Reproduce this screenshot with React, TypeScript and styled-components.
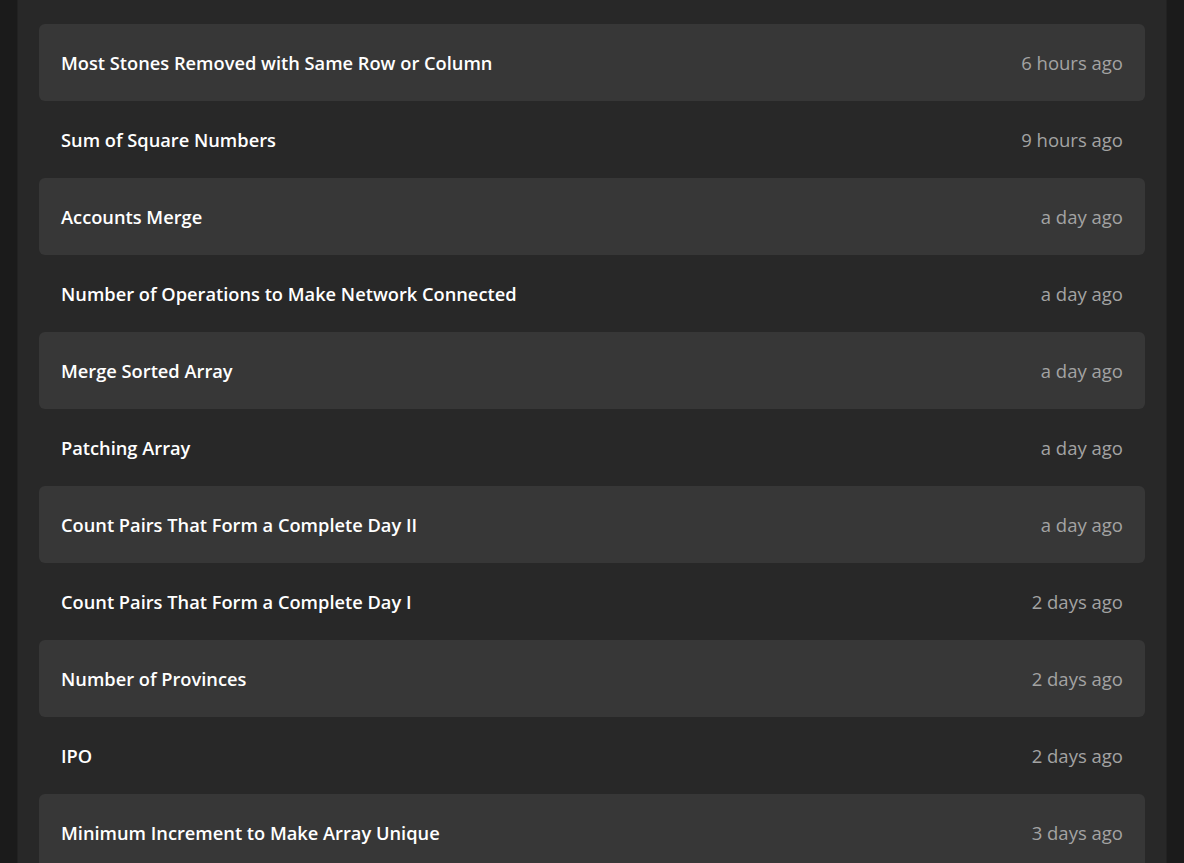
import React from 'react';
import styled, {createGlobalStyle} from "styled-components";

const GlobalStyle = createGlobalStyle`
  html, body {
    margin: 0;
    padding: 0;
    background: #1b1b1b;
    overflow: hidden;
  }
  * {
    box-sizing: border-box;
  }
`

const problems = [
    {title: "Most Stones Removed with Same Row or Column", time: "6 hours ago"},
    {title: "Sum of Square Numbers", time: "9 hours ago"},
    {title: "Accounts Merge", time: "a day ago"},
    {title: "Number of Operations to Make Network Connected", time: "a day ago"},
    {title: "Merge Sorted Array", time: "a day ago"},
    {title: "Patching Array", time: "a day ago"},
    {title: "Count Pairs That Form a Complete Day II", time: "a day ago"},
    {title: "Count Pairs That Form a Complete Day I", time: "2 days ago"},
    {title: "Number of Provinces", time: "2 days ago"},
    {title: "IPO", time: "2 days ago"},
    {title: "Minimum Increment to Make Array Unique", time: "3 days ago"},
]

export default function App() {
    return (
        <>
            <GlobalStyle/>
            <Panel>
                <List>
                    {problems.map((p, i) => (
                        <Row key={p.title} striped={i % 2 === 0}>
                            <Title>{p.title}</Title>
                            <Time>{p.time}</Time>
                        </Row>
                    ))}
                </List>
            </Panel>
        </>
    );
}

const Panel = styled.section`
  max-width: 1150px;
  margin: 0 auto;
  min-height: 100vh;
  background: #282828;
  border-left: 1px solid #222;
  border-right: 1px solid #222;
  padding: 24px 21px;
  font-family: "Open Sans", "Noto Sans", sans-serif;
`

const List = styled.ul`
  list-style: none;
  margin: 0;
  padding: 0;
`

const Row = styled.li<{ striped: boolean }>`
  display: flex;
  align-items: center;
  justify-content: space-between;
  height: 77px;
  padding: 0 22px;
  border-radius: 6px;
  background: ${p => p.striped ? "#373737" : "transparent"};
`

const Title = styled.span`
  color: #ffffff;
  font-size: 18.25px;
  font-weight: 600;
`

const Time = styled.span`
  color: #a3a3a3;
  font-size: 18.5px;
  font-weight: 400;
`
